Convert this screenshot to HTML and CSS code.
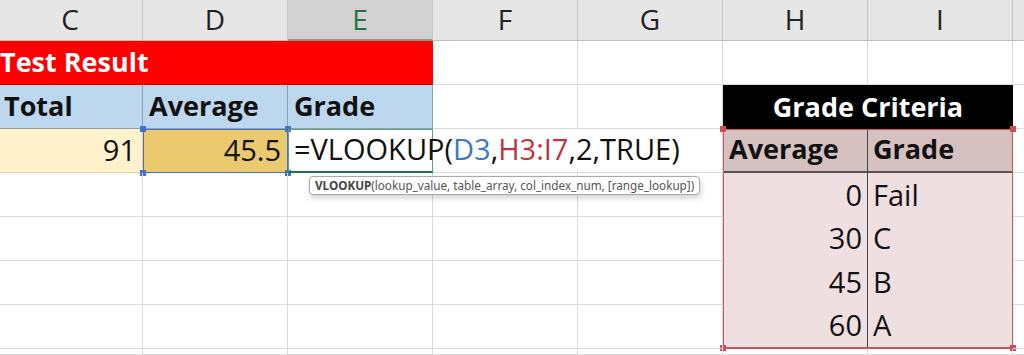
FILE: index.html
```html
<!DOCTYPE html>
<html lang="en">
<head>
    <title>VLOOKUP Grade</title>
    <link rel="stylesheet" href="styles.css">
</head>
<body>
    <div class="sheet">
        <!-- column headers -->
        <div class="col-head">C</div>
        <div class="col-head">D</div>
        <div class="col-head active">E</div>
        <div class="col-head">F</div>
        <div class="col-head">G</div>
        <div class="col-head">H</div>
        <div class="col-head">I</div>
        <div class="col-head"></div>

        <!-- row 1 -->
        <div class="cell title span-3">Test Result</div>
        <div class="cell"></div>
        <div class="cell"></div>
        <div class="cell"></div>
        <div class="cell"></div>
        <div class="cell"></div>

        <!-- row 2 -->
        <div class="cell head-blue">Total</div>
        <div class="cell head-blue">Average</div>
        <div class="cell head-blue">Grade</div>
        <div class="cell"></div>
        <div class="cell"></div>
        <div class="cell criteria-title span-2">Grade Criteria</div>
        <div class="cell"></div>

        <!-- row 3 -->
        <div class="cell num yellow">91</div>
        <div class="cell num gold selected">
            45.5
            <span class="handle tl"></span><span class="handle tr"></span>
            <span class="handle bl"></span><span class="handle br"></span>
        </div>
        <div class="cell editing">
            <span class="formula">=VLOOKUP(<span class="ref-blue">D3</span>,<span class="ref-red">H3:I7</span>,2,TRUE)</span>
            <div class="tooltip"><b>VLOOKUP</b>(lookup_value, table_array, col_index_num, [range_lookup])</div>
        </div>
        <div class="cell no-right"></div>
        <div class="cell"></div>

        <div class="criteria">
            <div class="crit-cell crit-head">Average</div>
            <div class="crit-cell crit-head">Grade</div>
            <div class="crit-cell num">0</div>
            <div class="crit-cell">Fail</div>
            <div class="crit-cell num">30</div>
            <div class="crit-cell">C</div>
            <div class="crit-cell num">45</div>
            <div class="crit-cell">B</div>
            <div class="crit-cell num">60</div>
            <div class="crit-cell">A</div>
            <span class="handle red tl"></span><span class="handle red tr"></span>
            <span class="handle red bl"></span><span class="handle red br"></span>
        </div>
        <div class="cell"></div>

        <!-- rows 4 - 8 -->
        <div class="cell"></div><div class="cell"></div><div class="cell"></div><div class="cell"></div><div class="cell"></div><div class="cell"></div>
        <div class="cell"></div><div class="cell"></div><div class="cell"></div><div class="cell"></div><div class="cell"></div><div class="cell"></div>
        <div class="cell"></div><div class="cell"></div><div class="cell"></div><div class="cell"></div><div class="cell"></div><div class="cell"></div>
        <div class="cell"></div><div class="cell"></div><div class="cell"></div><div class="cell"></div><div class="cell"></div><div class="cell"></div>
        <div class="cell"></div><div class="cell"></div><div class="cell"></div><div class="cell"></div><div class="cell"></div><div class="cell"></div><div class="cell"></div><div class="cell"></div>
    </div>
</body>
</html>
```

FILE: styles.css
```css
* {
    box-sizing: border-box;
}
html, body {
    height: 355px;
}
body {
    margin: 0;
    background: #fff;
    font-family: 'Open Sans', 'Liberation Sans', sans-serif;
    overflow: hidden;
}
.sheet {
    display: grid;
    grid-template-columns: repeat(7, 145px) 1fr;
    grid-template-rows: 41px repeat(7, 44px) 6px;
    margin-left: -2px;
    width: 1026px;
    height: 355px;
    overflow: hidden;
    font-size: 29px;
    color: #111;
}
.col-head {
    background: #e6e6e6;
    border-right: 1px solid #c8c8c8;
    border-bottom: 1px solid #bdbdbd;
    display: flex;
    align-items: center;
    justify-content: center;
    font-size: 28px;
    color: #222;
    padding-bottom: 2px;
}
.col-head.active {
    background: #d2d2d2;
    color: #217346;
    border-bottom: 2px solid #8a9a8f;
}
.cell {
    border-right: 1px solid #dadada;
    border-bottom: 1px solid #dadada;
    display: flex;
    align-items: flex-end;
    padding: 0 6px 3px 6px;
    white-space: nowrap;
    position: relative;
    line-height: 38px;
}
.span-3 { grid-column: span 3; }
.span-2 { grid-column: span 2; }
.num { justify-content: flex-end; }
.no-right { border-right: none; }

.title {
    background: #ff0000;
    border-right: none;
    border-bottom: 1px solid #e00000;
    color: #fff;
    font-weight: bold;
    font-size: 27px;
    padding-left: 2px;
}

.head-blue {
    background: #bdd7ee;
    border-right: 1px solid #8f9fae;
    border-bottom: 1px solid #8f9fae;
    font-weight: bold;
    font-size: 27px;
}
.yellow { background: #fff2cc; border-color: #e3d3a8; }
.gold { background: #ebc96f; }

.selected {
    border: 1px solid #4472c4;
}
.handle {
    position: absolute;
    width: 6px;
    height: 6px;
    background: #4472c4;
}
.handle.tl { left: -4px; top: -4px; }
.handle.tr { right: -4px; top: -4px; }
.handle.bl { left: -4px; bottom: -4px; }
.handle.br { right: -4px; bottom: -4px; }
.handle.red { background: #cf4d59; }

.editing {
    border: 1px solid #5ea17a;
    border-bottom: 2px solid #217346;
    overflow: visible;
    z-index: 2;
    padding-left: 5px;
}
.ref-blue { color: #3a78c8; }
.ref-red { color: #c0343f; }

.tooltip {
    position: absolute;
    left: 20px;
    top: 46px;
    width: 391px;
    height: 19px;
    background: #fff;
    border: 1px solid #a9a9a9;
    border-radius: 4px;
    box-shadow: 1px 3px 6px rgba(0, 0, 0, 0.18);
    font-family: 'Noto Sans', 'Open Sans', sans-serif;
    font-size: 11.7px;
    line-height: 17px;
    color: #555;
    padding-left: 5px;
    z-index: 3;
}
.tooltip b { color: #444; }

.criteria-title {
    background: #000;
    color: #fff;
    font-weight: bold;
    font-size: 27px;
    justify-content: center;
    border-right: none;
    border-bottom: none;
}

.criteria {
    grid-column: span 2;
    grid-row: span 5;
    display: grid;
    grid-template-columns: 1fr 1fr;
    grid-template-rows: repeat(5, 1fr);
    background: #f0dfe0;
    border: 1px solid #d0505a;
    border-bottom-width: 2px;
    position: relative;
}
.crit-cell {
    display: flex;
    align-items: flex-end;
    padding: 0 5px 3px 5px;
    line-height: 38px;
}
.crit-cell:nth-child(odd) {
    border-right: 1px solid #444;
}
.crit-head {
    background: #d6c1c1;
    font-weight: bold;
    font-size: 27px;
    border-bottom: 2px solid #5c5252;
}
```
